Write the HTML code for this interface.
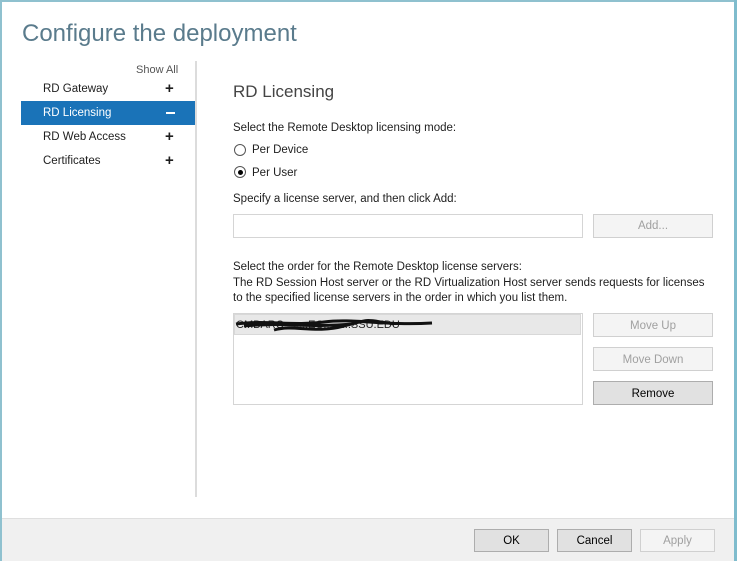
<!DOCTYPE html>
<html><head><style>
*{margin:0;padding:0;box-sizing:border-box}
body{width:737px;height:561px;position:relative;background:#fff;font-family:"Liberation Sans",sans-serif;font-size:11.5px;color:#1e1e1e;overflow:hidden}
.a{position:absolute;white-space:nowrap}
.btn{position:absolute;border:1px solid #adadad;background:#e1e1e1;text-align:center;font-size:11.5px;color:#000}
.dis{border-color:#d0d0d0;background:#f4f4f4;color:#a0a0a0}
.radio{position:absolute;width:12px;height:12px;border:1px solid #555;border-radius:50%;background:#fff}
</style></head><body>
<div class="a" style="left:0;top:0;width:737px;height:2px;background:#8fc1cf"></div>
<div class="a" style="left:0;top:0;width:2px;height:561px;background:#8fc1cf"></div>
<div class="a" style="right:0;top:0;width:3px;height:561px;background:#7fbccd"></div>
<div class="a" style="left:22px;top:20px;font-size:24px;color:#5a7b8c">Configure the deployment</div>
<div class="a" style="left:136px;top:64px;font-size:11px;color:#555">Show All</div>
<div class="a" style="left:195px;top:61px;width:2px;height:436px;background:#dcdcdc"></div>
<div class="a" style="left:43px;top:83px">RD Gateway</div><div class="a" style="left:165px;top:80px;font-size:15px;font-weight:bold">+</div>
<div class="a" style="left:21px;top:101px;width:174px;height:24px;background:#1a73b8"></div>
<div class="a" style="left:43px;top:107px;color:#fff">RD Licensing</div><div class="a" style="left:166px;top:112px;width:9px;height:2px;background:#fff"></div>
<div class="a" style="left:43px;top:131px">RD Web Access</div><div class="a" style="left:165px;top:128px;font-size:15px;font-weight:bold">+</div>
<div class="a" style="left:43px;top:155px">Certificates</div><div class="a" style="left:165px;top:152px;font-size:15px;font-weight:bold">+</div>
<div class="a" style="left:233px;top:82px;font-size:17px;color:#444">RD Licensing</div>
<div class="a" style="left:233px;top:122px">Select the Remote Desktop licensing mode:</div>
<div class="radio" style="left:234px;top:144px"></div><div class="a" style="left:252px;top:144px">Per Device</div>
<div class="radio" style="left:234px;top:166px"><div style="position:absolute;left:2.5px;top:2.5px;width:5px;height:5px;border-radius:50%;background:#000"></div></div><div class="a" style="left:252px;top:167px">Per User</div>
<div class="a" style="left:233px;top:193px">Specify a license server, and then click Add:</div>
<div class="a" style="left:233px;top:214px;width:350px;height:24px;border:1px solid #d5d5d5"></div>
<div class="btn dis" style="left:593px;top:214px;width:120px;height:24px;line-height:22px">Add...</div>
<div class="a" style="left:233px;top:261px">Select the order for the Remote Desktop license servers:</div>
<div class="a" style="left:233px;top:277px">The RD Session Host server or the RD Virtualization Host server sends requests for licenses</div>
<div class="a" style="left:233px;top:292px">to the specified license servers in the order in which you list them.</div>
<div class="a" style="left:233px;top:313px;width:350px;height:92px;border:1px solid #d5d5d5"></div>
<div class="a" style="left:234px;top:314px;width:347px;height:21px;background:#e8e8e8;border:1px solid #d8d8d8"></div>
<div class="a" style="left:236px;top:319px;font-size:11px;color:#222">CMBARC........EC.........SSU.EDU</div>
<svg class="a" style="left:234px;top:314px" width="210" height="22"><path d="M2 10 C30 6 60 12 90 8 S150 12 198 9 M40 16 C60 10 80 20 110 12 S130 6 160 10 M10 12 C50 8 70 14 120 10" stroke="#111" stroke-width="3" fill="none"/></svg>
<div class="btn dis" style="left:593px;top:313px;width:120px;height:24px;line-height:24px">Move Up</div>
<div class="btn dis" style="left:593px;top:347px;width:120px;height:24px;line-height:24px">Move Down</div>
<div class="btn" style="left:593px;top:381px;width:120px;height:24px;line-height:24px">Remove</div>
<div class="a" style="left:2px;top:518px;width:732px;height:43px;background:#f0f0f0;border-top:1px solid #dfdfdf"></div>
<div class="btn" style="left:474px;top:529px;width:75px;height:23px;line-height:23px">OK</div>
<div class="btn" style="left:557px;top:529px;width:75px;height:23px;line-height:23px">Cancel</div>
<div class="btn dis" style="left:640px;top:529px;width:75px;height:23px;line-height:23px">Apply</div>
</body></html>
